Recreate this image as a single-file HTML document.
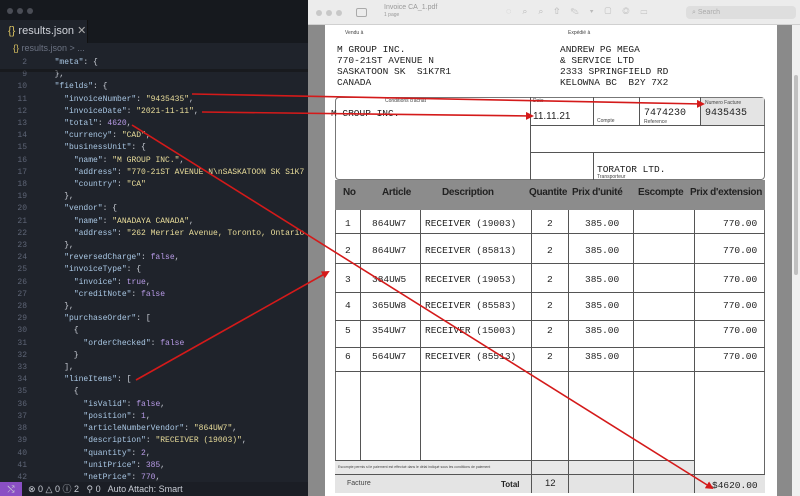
<!DOCTYPE html>
<html><head><meta charset="utf-8"><style>
*{margin:0;padding:0;box-sizing:border-box}
body{width:800px;height:496px;overflow:hidden;background:#1e222a;position:relative;font-family:"Liberation Sans",sans-serif}
.ed{position:absolute;left:0;top:0;width:308px;height:496px;background:#1f232b}
.tb{position:absolute;left:0;top:0;width:308px;height:28px;background:#16191e}
.dot{position:absolute;top:8px;width:6px;height:6px;border-radius:50%;background:#4a4d55}
.tab{position:absolute;left:0;top:20px;width:88px;height:23px;background:#1f232b;color:#d0d3da;font-size:11px;line-height:23px;padding-left:8px;border-right:1px solid #111}
.tabbar{position:absolute;left:0;top:20px;width:308px;height:23px;background:#16191e}
.bc{position:absolute;left:13px;top:43px;font-size:9px;color:#6c7383}
.code{position:absolute;left:0;top:57px;font-family:"Liberation Mono",monospace;font-size:8px;line-height:12.2px;white-space:pre;color:#c8ccd4}
.ln{display:inline-block;width:27px;text-align:right;color:#5d6475;margin-right:18px}
.k{color:#a9c7e4}.s{color:#e8dc9a}.n{color:#b79ae6}
.sh{position:absolute;left:0;top:69px;width:308px;height:3px;background:#111;opacity:.5}
.status{position:absolute;left:0;top:482px;width:308px;height:14px;background:#1b1e25;color:#c8ccd4;font-size:9px;line-height:14px}
.pdf{position:absolute;left:308px;top:0;width:492px;height:496px;background:#8a8a8a}
.ptb{position:absolute;left:0;top:0;width:492px;height:25px;background:#ececec;border-bottom:1px solid #d0d0d0}
.page{position:absolute;left:17px;top:25px;width:452px;height:471px;background:#fff}
.scroll{position:absolute;left:484px;top:25px;width:8px;height:471px;background:#f0f0f0}
.t{position:absolute;font-family:"Liberation Mono",monospace;font-size:9.5px;color:#222;white-space:pre;line-height:11px}
.sm{position:absolute;font-size:5px;color:#444;white-space:nowrap}
.grid{position:absolute;background:#555}
.hd span{position:absolute;white-space:nowrap}
</style></head><body>
<div class="ed">
<div class="tb"></div>
<div class="dot" style="left:7px"></div><div class="dot" style="left:17px"></div><div class="dot" style="left:27px"></div>
<div class="tabbar"></div>
<div class="tab"><span style="color:#d8c060">{}</span> results.json <span style="color:#aaa">✕</span></div>
<div class="bc"><span style="color:#d8c060">{}</span> results.json &gt; ...</div>
<div class="code"><span class="ln">2</span>  <span class="k">"meta"</span>: {
<span class="ln">9</span>  },
<span class="ln">10</span>  <span class="k">"fields"</span>: {
<span class="ln">11</span>    <span class="k">"invoiceNumber"</span>: <span class="s">"9435435"</span>,
<span class="ln">12</span>    <span class="k">"invoiceDate"</span>: <span class="s">"2021-11-11"</span>,
<span class="ln">13</span>    <span class="k">"total"</span>: <span class="n">4620</span>,
<span class="ln">14</span>    <span class="k">"currency"</span>: <span class="s">"CAD"</span>,
<span class="ln">15</span>    <span class="k">"businessUnit"</span>: {
<span class="ln">16</span>      <span class="k">"name"</span>: <span class="s">"M GROUP INC."</span>,
<span class="ln">17</span>      <span class="k">"address"</span>: <span class="s">"770-21ST AVENUE N\nSASKATOON SK S1K7</span>
<span class="ln">18</span>      <span class="k">"country"</span>: <span class="s">"CA"</span>
<span class="ln">19</span>    },
<span class="ln">20</span>    <span class="k">"vendor"</span>: {
<span class="ln">21</span>      <span class="k">"name"</span>: <span class="s">"ANADAYA CANADA"</span>,
<span class="ln">22</span>      <span class="k">"address"</span>: <span class="s">"262 Merrier Avenue, Toronto, Ontario</span>
<span class="ln">23</span>    },
<span class="ln">24</span>    <span class="k">"reversedCharge"</span>: <span class="n">false</span>,
<span class="ln">25</span>    <span class="k">"invoiceType"</span>: {
<span class="ln">26</span>      <span class="k">"invoice"</span>: <span class="n">true</span>,
<span class="ln">27</span>      <span class="k">"creditNote"</span>: <span class="n">false</span>
<span class="ln">28</span>    },
<span class="ln">29</span>    <span class="k">"purchaseOrder"</span>: [
<span class="ln">30</span>      {
<span class="ln">31</span>        <span class="k">"orderChecked"</span>: <span class="n">false</span>
<span class="ln">32</span>      }
<span class="ln">33</span>    ],
<span class="ln">34</span>    <span class="k">"lineItems"</span>: [
<span class="ln">35</span>      {
<span class="ln">36</span>        <span class="k">"isValid"</span>: <span class="n">false</span>,
<span class="ln">37</span>        <span class="k">"position"</span>: <span class="n">1</span>,
<span class="ln">38</span>        <span class="k">"articleNumberVendor"</span>: <span class="s">"864UW7"</span>,
<span class="ln">39</span>        <span class="k">"description"</span>: <span class="s">"RECEIVER (19003)"</span>,
<span class="ln">40</span>        <span class="k">"quantity"</span>: <span class="n">2</span>,
<span class="ln">41</span>        <span class="k">"unitPrice"</span>: <span class="n">385</span>,
<span class="ln">42</span>        <span class="k">"netPrice"</span>: <span class="n">770</span>,</div>
<div class="sh"></div>
<div class="status"><span style="display:inline-block;width:22px;background:#8a4fc4;text-align:center;margin-right:6px">⤭</span>⊗ 0 △ 0 ⓘ 2 &nbsp; ⚲ 0 &nbsp; Auto Attach: Smart</div>
</div>
<div class="pdf">
<div class="ptb">
<div class="dot" style="left:8px;top:10px;background:#c8c8c8"></div><div class="dot" style="left:18px;top:10px;background:#c8c8c8"></div><div class="dot" style="left:28px;top:10px;background:#c8c8c8"></div>
<div style="position:absolute;left:48px;top:8px;width:11px;height:9px;border:1px solid #aaa;border-radius:2px"></div>
<div style="position:absolute;left:76px;top:4px;font-size:7px;color:#999">Invoice CA_1.pdf<br><span style="font-size:5px">1 page</span></div>
<div style="position:absolute;left:198px;top:6px;font-size:9px;color:#bbb;letter-spacing:11px">◌⌕⌕⇧✎▾▢◎▭</div>
<div style="position:absolute;left:378px;top:6px;width:110px;height:13px;background:#dedede;border-radius:4px;font-size:7px;color:#aaa;line-height:13px;padding-left:6px">⌕ Search</div>
</div>
<div class="page">
<div class="sm" style="left:20px;top:5px">Vendu à</div>
<div class="sm" style="left:243px;top:5px">Expédié à</div>
<div class="t" style="left:12px;top:19px">M GROUP INC.
770-21ST AVENUE N
SASKATOON SK  S1K7R1
CANADA</div>
<div class="t" style="left:235px;top:19px">ANDREW PG MEGA
& SERVICE LTD
2333 SPRINGFIELD RD
KELOWNA BC  B2Y 7X2</div>
<div style="position:absolute;left:10px;top:72px;width:430px;height:83px;border:1px solid #777;border-radius:4px"></div>
<div class="grid" style="left:205px;top:72px;width:1px;height:83px"></div>
<div class="grid" style="left:205px;top:100px;width:235px;height:1px"></div>
<div class="grid" style="left:205px;top:127px;width:235px;height:1px"></div>
<div class="grid" style="left:268px;top:72px;width:1px;height:28px"></div>
<div class="grid" style="left:268px;top:127px;width:1px;height:28px"></div>
<div class="grid" style="left:314px;top:72px;width:1px;height:28px"></div>
<div class="grid" style="left:375px;top:72px;width:1px;height:28px"></div>
<div style="position:absolute;left:376px;top:73px;width:63px;height:27px;background:#e4e4e4"></div>
<div class="sm" style="left:60px;top:73px">Conditions d'achat</div>
<div class="t" style="left:6px;top:83px">M GROUP INC.</div>
<div class="sm" style="left:208px;top:73px">Date</div>
<div class="t" style="left:208px;top:86px;font-family:'Liberation Sans';font-size:10px">11.11.21</div>
<div class="sm" style="left:272px;top:93px">Compte</div>
<div class="t" style="left:319px;top:83px;font-size:10px">7474230</div>
<div class="sm" style="left:319px;top:94px">Reference</div>
<div class="sm" style="left:380px;top:75px">Numero Facture</div>
<div class="t" style="left:380px;top:83px;font-size:10px">9435435</div>
<div class="t" style="left:272px;top:139px">TORATOR LTD.</div>
<div class="sm" style="left:272px;top:149px">Transporteur</div>
<div style="position:absolute;left:10px;top:155px;width:430px;height:313px;border:1px solid #666;border-radius:0 0 4px 4px"></div>
<div style="position:absolute;left:10px;top:155px;width:430px;height:30px;background:#8c8c8c"></div>
<div style="position:absolute;left:10px;top:435px;width:359px;height:14px;background:#e8e8e8"></div>
<div style="position:absolute;left:10px;top:449px;width:430px;height:19px;background:#e4e4e4"></div>
<div class="sm" style="left:13px;top:440px;font-size:3.5px">Escompte permis si le paiement est effectué dans le délai indiqué sous les conditions de paiement</div>
<div class="hd" style="position:absolute;left:0;top:162px;width:452px;font-size:10px;font-weight:bold;color:#222;letter-spacing:-0.3px">
<span style="left:18px">No</span><span style="left:57px">Article</span><span style="left:117px">Description</span><span style="left:204px">Quantite</span><span style="left:247px">Prix d'unité</span><span style="left:313px">Escompte</span><span style="left:365px">Prix d'extension</span></div>
<div class="grid" style="left:35px;top:185px;width:1px;height:250px"></div>
<div class="grid" style="left:95px;top:185px;width:1px;height:250px"></div>
<div class="grid" style="left:206px;top:185px;width:1px;height:283px"></div>
<div class="grid" style="left:243px;top:185px;width:1px;height:283px"></div>
<div class="grid" style="left:308px;top:185px;width:1px;height:283px"></div>
<div class="grid" style="left:369px;top:185px;width:1px;height:283px"></div>
<div class="grid" style="left:10px;top:435px;width:359px;height:1px"></div>
<div class="grid" style="left:10px;top:449px;width:430px;height:1px"></div>
<div class="grid" style="left:10px;top:208px;width:430px;height:1px"></div>
<div class="grid" style="left:10px;top:238px;width:430px;height:1px"></div>
<div class="grid" style="left:10px;top:267px;width:430px;height:1px"></div>
<div class="grid" style="left:10px;top:295px;width:430px;height:1px"></div>
<div class="grid" style="left:10px;top:322px;width:430px;height:1px"></div>
<div class="grid" style="left:10px;top:346px;width:430px;height:1px"></div>
<div class="t" style="left:20px;top:193px">1</div><div class="t" style="left:20px;top:220px">2</div><div class="t" style="left:20px;top:249px">3</div><div class="t" style="left:20px;top:275px">4</div><div class="t" style="left:20px;top:300px">5</div><div class="t" style="left:20px;top:326px">6</div>
<div class="t" style="left:47px;top:193px">864UW7</div><div class="t" style="left:47px;top:220px">864UW7</div><div class="t" style="left:47px;top:249px">384UW5</div><div class="t" style="left:47px;top:275px">365UW8</div><div class="t" style="left:47px;top:300px">354UW7</div><div class="t" style="left:47px;top:326px">564UW7</div>
<div class="t" style="left:100px;top:193px">RECEIVER (19003)</div><div class="t" style="left:100px;top:220px">RECEIVER (85813)</div><div class="t" style="left:100px;top:249px">RECEIVER (19053)</div><div class="t" style="left:100px;top:275px">RECEIVER (85583)</div><div class="t" style="left:100px;top:300px">RECEIVER (15003)</div><div class="t" style="left:100px;top:326px">RECEIVER (85513)</div>
<div class="t" style="left:222px;top:193px">2</div><div class="t" style="left:222px;top:220px">2</div><div class="t" style="left:222px;top:249px">2</div><div class="t" style="left:222px;top:275px">2</div><div class="t" style="left:222px;top:300px">2</div><div class="t" style="left:222px;top:326px">2</div>
<div class="t" style="left:260px;top:193px">385.00</div><div class="t" style="left:260px;top:220px">385.00</div><div class="t" style="left:260px;top:249px">385.00</div><div class="t" style="left:260px;top:275px">385.00</div><div class="t" style="left:260px;top:300px">385.00</div><div class="t" style="left:260px;top:326px">385.00</div>
<div class="t" style="left:398px;top:193px">770.00</div><div class="t" style="left:398px;top:220px">770.00</div><div class="t" style="left:398px;top:249px">770.00</div><div class="t" style="left:398px;top:275px">770.00</div><div class="t" style="left:398px;top:300px">770.00</div><div class="t" style="left:398px;top:326px">770.00</div>
<div class="sm" style="left:22px;top:455px;font-size:7px">Facture</div>
<div style="position:absolute;left:176px;top:455px;font-size:8px;font-weight:bold;color:#222">Total</div>
<div class="t" style="left:220px;top:453px;font-family:'Liberation Sans'">12</div>
<div class="t" style="left:387px;top:455px">$4620.00</div>
</div>
<div class="scroll"><div style="position:absolute;left:2px;top:50px;width:4px;height:200px;background:#c0c0c0;border-radius:2px"></div></div>
</div>
<svg style="position:absolute;left:0;top:0" width="800" height="496">
<defs><marker id="a" markerWidth="8" markerHeight="8" refX="6" refY="4" orient="auto" markerUnits="userSpaceOnUse"><path d="M0,0 L8,4 L0,8 Z" fill="#d41a1a"/></marker></defs>
<g stroke="#d41a1a" stroke-width="1.6" fill="none">
<line x1="192" y1="94" x2="703" y2="104" marker-end="url(#a)"/>
<line x1="202" y1="112" x2="532" y2="116" marker-end="url(#a)"/>
<line x1="132" y1="125" x2="712" y2="488" marker-end="url(#a)"/>
<line x1="136" y1="380" x2="328" y2="272" marker-end="url(#a)"/>
</g></svg>
</body></html>
